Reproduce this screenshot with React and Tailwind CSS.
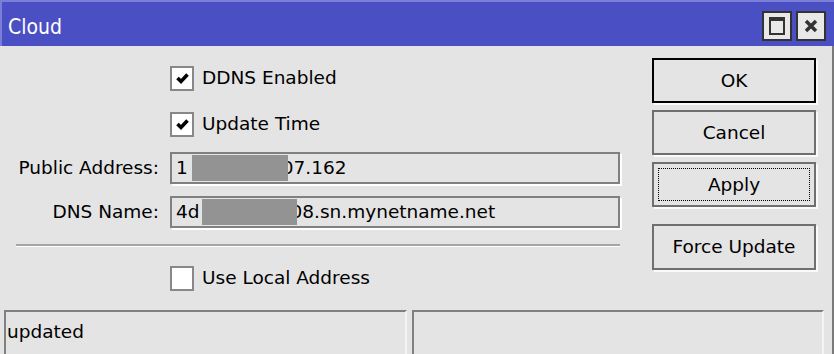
import React from "react";

const font = { fontFamily: '"DejaVu Sans", Verdana, sans-serif' };

const CheckBox = ({ checked }) => (
  <div className="w-[24px] h-[25px] border-2 border-[#888888] bg-white flex items-center justify-center">
    {checked && (
      <svg width="15" height="15" viewBox="0 0 15 15">
        <path d="M2.5 7 L6 10.5 L12.5 3.5" fill="none" stroke="#000" strokeWidth="3.6" />
      </svg>
    )}
  </div>
);

const CheckRow = ({ checked, label, className }) => (
  <div className={"flex items-center pl-[170px] h-[25px] " + className}>
    <CheckBox checked={checked} />
    <span className="ml-[8px] text-[18.5px] text-black leading-none">{label}</span>
  </div>
);

const Field = ({ label, before, hidden, after, className }) => (
  <div className={"flex items-center " + className}>
    <div className="w-[170px] pr-[11px] text-right text-[18.5px] text-black">{label}</div>
    <div className="w-[450px] h-[32px] border-2 border-[#808080] shadow-[2px_2px_0_#ffffff] flex items-center pl-[4px] text-[18.5px] text-black whitespace-nowrap overflow-hidden">
      <span>{before}</span>
      <span
        className="relative z-10 inline-block bg-[#939393] h-[26px] shrink-0"
        style={{ width: hidden[0], marginLeft: hidden[1], marginRight: hidden[2] }}
      />
      <span>{after}</span>
    </div>
  </div>
);

const WinButton = ({ children, variant, className }) => (
  <button
    className={
      "w-[164px] h-[45px] bg-[#e4e4e4] text-[18.5px] text-black flex items-center justify-center shadow-[2px_2px_0_#fafafa] " +
      (variant === "default" ? "border-2 border-black " : "border-2 border-[#6f6f6f] ") +
      (className || "")
    }
  >
    {variant === "focus" ? (
      <span className="w-[152px] h-[33px] border border-dotted border-black flex items-center justify-center">
        {children}
      </span>
    ) : (
      children
    )}
  </button>
);

export default function App() {
  return (
    <div className="w-[834px] h-[354px] bg-[#e4e4e4] overflow-hidden flex flex-col" style={font}>
      {/* Title bar */}
      <div className="h-[46px] shrink-0 bg-[#4b4fc4] border-t-2 border-l-2 border-[#7b7ed6] flex items-center justify-between pr-[8px]">
        <span
          className="pl-[6px] pt-[6px] text-white text-[21px] leading-none"
          style={{ fontFamily: '"DejaVu Sans Condensed", "DejaVu Sans", sans-serif' }}
        >
          Cloud
        </span>
        <div className="flex gap-[4px] mt-[4px]">
          <div className="w-[30px] h-[30px] border-2 border-[#333333] bg-[#e8e8e8] flex items-center justify-center">
            <div className="w-[16px] h-[18px] border-2 border-t-4 border-[#333333]" />
          </div>
          <div className="w-[30px] h-[30px] border-2 border-[#333333] bg-[#e8e8e8] flex items-center justify-center">
            <svg width="14" height="14" viewBox="0 0 14 14">
              <path d="M2 2 L12 12 M12 2 L2 12" stroke="#333" strokeWidth="3.5" />
            </svg>
          </div>
        </div>
      </div>

      {/* Body */}
      <div className="flex-1 flex flex-col border-r-2 border-[#7a7a7a]">
        <div className="h-[264px] flex">
          <div className="w-[620px] flex flex-col">
            <CheckRow checked label="DDNS Enabled" className="mt-[20px]" />
            <CheckRow checked label="Update Time" className="mt-[21px]" />
            <Field
              label="Public Address:"
              before="1"
              hidden={[96, 4, -6]}
              after="07.162"
              className="mt-[15px]"
            />
            <Field
              label="DNS Name:"
              before="4d"
              hidden={[95, 2, -6]}
              after="08.sn.mynetname.net"
              className="mt-[12px]"
            />
            <div className="ml-[16px] w-[604px] h-[3px] mt-[16px] border-t-2 border-[#a6a6a6] border-b border-b-white" />
            <CheckRow label="Use Local Address" className="mt-[19px]" />
          </div>
          <div className="ml-[32px] flex flex-col">
            <WinButton variant="default" className="mt-[12px]">OK</WinButton>
            <WinButton className="mt-[7px]">Cancel</WinButton>
            <WinButton variant="focus" className="mt-[7px]">Apply</WinButton>
            <WinButton className="mt-[17px] h-[46px]">Force Update</WinButton>
          </div>
        </div>

        {/* Status bar */}
        <div className="h-[44px] flex pl-[4px] gap-[5px]">
          <div className="w-[403px] h-full border-t-2 border-l-2 border-[#808080] border-r-2 border-r-[#f4f4f4] pt-[6px] pl-[1px] text-[18.5px] text-black">
            updated
          </div>
          <div className="w-[412px] h-full border-t-2 border-l-2 border-[#808080] border-r-2 border-r-[#f4f4f4]" />
        </div>
      </div>
    </div>
  );
}
